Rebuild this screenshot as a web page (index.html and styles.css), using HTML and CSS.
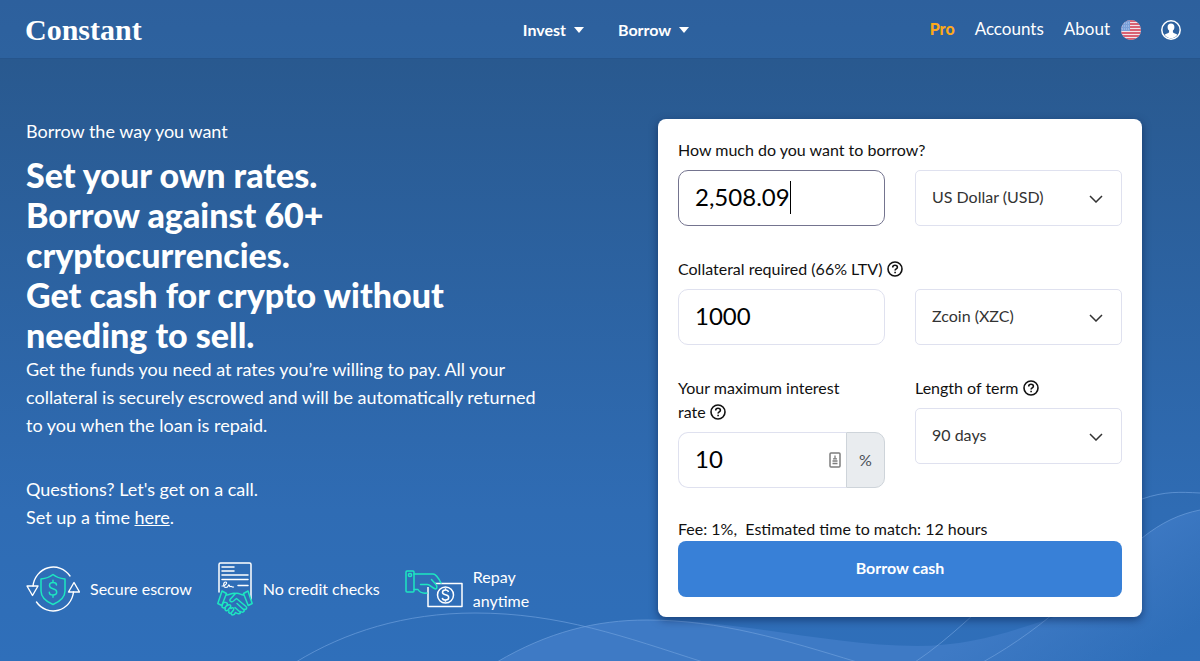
FILE: index.html
```
<!DOCTYPE html>
<html lang="en">
  <head>
    <meta charset="UTF-8" />
    <meta name="viewport" content="width=device-width, initial-scale=1.0" />
    <title>Constant</title>
    <link rel="stylesheet" href="styles.css" />
  </head>
  <body>
    <header class="navbar">
      <a href="#" class="logo">Constant</a>
      <nav class="menu">
        <button type="button" class="menu-item">Invest <span class="arrow"></span></button>
        <button type="button" class="menu-item">Borrow <span class="arrow"></span></button>
      </nav>
      <nav class="user-menu">
        <a href="#" class="pro">Pro</a>
        <a href="#">Accounts</a>
        <a href="#" class="about">About</a>
        <button type="button" class="icon-button flag" aria-label="Language">
          <svg width="20" height="20" viewBox="0 0 20 20">
            <defs>
              <clipPath id="round"><circle cx="10" cy="10" r="10" /></clipPath>
            </defs>
            <g clip-path="url(#round)">
              <rect width="20" height="20" fill="#f3e4ea" />
              <path d="M0 1h20M0 4h20M0 7h20M0 10h20M0 13h20M0 16h20M0 19h20" stroke="#d2364c" stroke-width="1.6" />
              <rect width="9" height="11" fill="#7a9fd8" />
              <path d="M1 3h8M1 6h8M1 9h8" stroke="#b4cbed" stroke-width="1" stroke-dasharray="1 1" />
            </g>
          </svg>
        </button>
        <button type="button" class="icon-button" aria-label="Profile">
          <svg width="20" height="20" viewBox="0 0 20 20">
            <circle cx="10" cy="10" r="9.2" fill="none" stroke="#fff" stroke-width="1.5" />
            <path d="M10 3.400c2.300 0 3.400 1.500 3.400 3.500 0 1.700-.6 2.800-1.500 3.700v1.700c.8 1 3.100 1.200 4.500 2.400A8.300 8.300 0 0 1 10 18.300a8.300 8.300 0 0 1-6.400-3.600c1.400-1.200 3.700-1.400 4.500-2.400v-1.700C7.200 9.700 6.600 8.600 6.600 6.900c0-2 1.100-3.500 3.400-3.500z" fill="#fff" />
          </svg>
        </button>
      </nav>
    </header>

    <main class="hero">
      <!-- background waves -->
      <svg class="waves" viewBox="0 0 1200 180" preserveAspectRatio="none" aria-hidden="true">
        <defs>
          <linearGradient id="fade" gradientUnits="userSpaceOnUse" x1="1060" y1="90" x2="1130" y2="190">
            <stop offset="0" stop-color="#3e7ac5" />
            <stop offset="1" stop-color="#3e7ac5" stop-opacity="0" />
          </linearGradient>
        </defs>
        <path d="M497 180C548 150 596 138 647 138C740 138 830 164 917 164C975 164 1020 146 1052 136C1090 104 1115 80 1142 56C1162 40 1180 32 1200 28V180z" />
        <path d="M296 180C345 150 405 131 475 131C560 131 625 155 703 180" />
        <path d="M497 180C548 150 596 138 647 138C720 138 785 158 857 180" />
        <path d="M915 180C985 134 1050 40 1142 17C1165 9 1180 10 1200 11" />
        <path d="M983 180C1048 144 1090 98 1142 56C1162 40 1180 32 1200 28" />
      </svg>

      <section class="intro">
        <p>Borrow the way you want</p>
        <h1>Set your own rates.<br />Borrow against 60+ cryptocurrencies.<br />Get cash for crypto without needing to sell.</h1>
        <p>Get the funds you need at rates you’re willing to pay. All your collateral is securely escrowed and will be automatically returned to you when the loan is repaid.</p>
        <p class="questions">Questions? Let's get on a call.<br />Set up a time <a href="#">here</a>.</p>

        <ul class="features">
          <li class="escrow">
            <svg width="54" height="46" viewBox="0 0 54 46">
              <g fill="none" stroke="#fff" stroke-width="1.4" stroke-linejoin="round" stroke-linecap="round">
                <path d="M7 20A20.500 21.500 0 0 1 44 10" />
                <path d="M1 20h11L6.500 29.500z" />
                <path d="M47.500 26A20.500 21.500 0 0 1 10.500 36" />
                <path d="M42.500 26h11L48 16.500z" />
              </g>
              <g fill="none" stroke="#1ee6c1" stroke-width="1.5" stroke-linejoin="round" stroke-linecap="round">
                <path d="M27 8.500C30 11 34 12.500 39 13v12c0 6-5 10.500-12 13.500C20 35.500 15 31 15 25V13c5-.5 9-2 12-4.500z" />
                <path d="M30.500 19c0-1.600-1.500-2.500-3.500-2.500s-3.500 1-3.500 3 1.500 2.700 3.500 3.200 3.700 1.300 3.700 3.300-1.600 3-3.700 3-3.700-1-3.700-2.800M27 14.200v2.300M27 29v2.300" />
              </g>
            </svg>
            <span>Secure escrow</span>
          </li>
          <li class="credit">
            <svg width="36" height="54" viewBox="0 0 36 54">
              <g fill="none" stroke="#fff" stroke-width="1.5" stroke-linejoin="round" stroke-linecap="round">
                <path d="M2 30V2.500Q2 1 3.500 1h29Q34 1 34 2.500V37" />
                <path d="M5 5h12M5 9h12M5 13h26M5 17.500h26M21 23.500h10" />
                <path d="M5 24c4 0 6-4 3.500-4S6 25.500 9 25.500s2-3 3-2.500 0 2 1.500 1.500 1.500 1 3 .5" stroke-width="1.2" />
              </g>
              <g fill="none" stroke="#1ee6c1" stroke-width="1.5" stroke-linejoin="round" stroke-linecap="round">
                <path d="M5 29l4.500 2.500L4.800 43.500.8 41.500z" />
                <path d="M31 29l-4.500 2.500L31.200 43.500l4-2z" />
                <path d="M9.500 33c4-.3 5.500-2.500 9.500-1.500M26.500 33c-3-.3-5-2.500-8-1.500l-5.500 6c-.8 2 1.500 3 3.500 1.500l3-2.500 9.500 8c1.700 1.600 0 3.600-2 2.800" />
                <path d="M27 47.500c1 2-1.500 3.500-3.500 2M23.500 49.500c.2 2.500-2.500 3-5 1M18.500 50.500c-1 3-4 3-4.500 1" />
                <path d="M6 41l-1 3c-.5 2 2 2.500 3.500 1l1.500-2c1.500-2-2-3.500-4-2zM8.500 46c-1.500 2 1 3.500 2.500 2l2.500-3c1-2-1.500-3-3-1.500M12 49c-1 2 1 3 2.500 1.500l2-2.500c1-2-1-3-2.500-1.500M20 41.500l6.500 6M18 45.500l5 4.500" />
              </g>
            </svg>
            <span>No credit checks</span>
          </li>
          <li class="repay">
            <svg width="58" height="38" viewBox="0 0 58 38">
              <g fill="none" stroke="#fff" stroke-width="1.5" stroke-linejoin="round">
                <path d="M23 17v19.500h34v-23H30" />
                <circle cx="40.500" cy="25" r="8" />
                <path d="M43.500 22c-.3-1.400-1.400-2-3-2s-3 .7-3 2.300 1.300 2.200 3 2.500 3.200 1 3.200 2.700-1.500 2.500-3.200 2.500-3-.8-3.200-2.200M40.500 18.200V20M40.500 30v1.800" />
              </g>
              <g fill="none" stroke="#1ee6c1" stroke-width="1.5" stroke-linejoin="round" stroke-linecap="round">
                <rect x="1" y="1" width="8" height="21" rx="1" />
                <circle cx="5" cy="5" r="1.6" />
                <path d="M9 4h19c3 0 5 3 8 9M9 19.500h4c2 3.500 5 4 9 3.500M15.500 14.500h7c2.500 0 4 3 8 4.500 2-.5 1.500-3 .5-4.500l-4.500-5" />
              </g>
            </svg>
            <span>Repay anytime</span>
          </li>
        </ul>
      </section>

      <form class="card">
        <div class="row">
          <div class="field">
            <label for="amount">How much do you want to borrow?</label>
            <div class="control">
              <input type="text" id="amount" class="active" value="2,508.09" />
              <span class="caret"></span>
            </div>
          </div>
          <div class="field">
            <div class="control">
              <select id="currency" aria-label="Currency">
                <option>US Dollar (USD)</option>
              </select>
              <svg class="chevron" width="14" height="8" viewBox="0 0 14 8"><path d="M1 1l6 6 6-6" /></svg>
            </div>
          </div>
        </div>

        <div class="row">
          <div class="field">
            <label for="collateral">Collateral required (66% LTV)
              <svg class="help" width="16" height="16" viewBox="0 0 16 16"><circle cx="8" cy="8" r="7" /><path d="M5.700 6.400c0-1.400 1-2.200 2.300-2.200s2.400.8 2.400 2c0 1.600-2.300 1.600-2.300 3.200M8.100 10.800v1.500" /></svg>
            </label>
            <input type="text" id="collateral" value="1000" />
          </div>
          <div class="field">
            <div class="control">
              <select id="coin" aria-label="Collateral coin">
                <option>Zcoin (XZC)</option>
              </select>
              <svg class="chevron" width="14" height="8" viewBox="0 0 14 8"><path d="M1 1l6 6 6-6" /></svg>
            </div>
          </div>
        </div>

        <div class="row last">
          <div class="field">
            <label for="rate">Your maximum interest
              <span class="nowrap">rate
                <svg class="help" width="16" height="16" viewBox="0 0 16 16"><circle cx="8" cy="8" r="7" /><path d="M5.700 6.400c0-1.400 1-2.200 2.300-2.200s2.400.8 2.400 2c0 1.600-2.300 1.600-2.300 3.200M8.100 10.800v1.500" /></svg>
              </span>
            </label>
            <div class="control group">
              <input type="text" id="rate" value="10" />
              <svg class="autofill" width="12" height="16" viewBox="0 0 12 16">
                <rect x="1" y="1" width="10" height="14" rx="1" fill="#fff" stroke="#7d7d7d" stroke-width="1.5" />
                <path d="M6 3.500v4M4 6.800h4M3.500 9h5M3.500 11.500h5" stroke="#7d7d7d" stroke-width="1.3" />
              </svg>
              <span class="percent">%</span>
            </div>
          </div>
          <div class="field top">
            <label for="term">Length of term
              <svg class="help" width="16" height="16" viewBox="0 0 16 16"><circle cx="8" cy="8" r="7" /><path d="M5.700 6.400c0-1.400 1-2.200 2.300-2.200s2.400.8 2.400 2c0 1.600-2.300 1.600-2.300 3.200M8.100 10.800v1.500" /></svg>
            </label>
            <div class="control">
              <select id="term">
                <option>90 days</option>
              </select>
              <svg class="chevron" width="14" height="8" viewBox="0 0 14 8"><path d="M1 1l6 6 6-6" /></svg>
            </div>
          </div>
        </div>

        <p class="fee">Fee: 1%,&nbsp; Estimated time to match: 12 hours</p>
        <button type="submit" class="submit">Borrow cash</button>
      </form>
    </main>
  </body>
</html>
```

FILE: styles.css
```
* {
  box-sizing: border-box;
}
body {
  margin: 0;
  min-height: 100vh;
  display: flex;
  flex-direction: column;
  font: 16px/24px Lato, "Open Sans", sans-serif;
  color: #111;
  background: #2c609d;
}
p,
h1,
ul {
  margin: 0;
  padding: 0;
}
button {
  font-family: inherit;
  border: none;
  cursor: pointer;
}

/* navbar */
.navbar {
  display: grid;
  grid-template-columns: 1fr auto 1fr;
  align-items: center;
  height: 58px;
  padding: 2px 19px 0 25px;
  background: linear-gradient(#2d609d, #2d629f);
}
.logo {
  font: bold 30px "Liberation Serif", serif;
  color: #fff;
  text-decoration: none;
}
.menu {
  display: flex;
  gap: 34px;
  margin-left: 6px;
}
.menu-item {
  display: flex;
  align-items: center;
  gap: 8px;
  padding: 0;
  background: none;
  color: #fff;
  font-size: 16px;
  line-height: 20px;
  font-weight: 700;
}
.arrow {
  border: 5px solid transparent;
  border-top: 6px solid #fff;
  border-bottom: none;
}
.user-menu {
  display: flex;
  align-items: center;
  justify-content: flex-end;
  gap: 20px;
}
.user-menu a {
  padding-bottom: 2px;
  color: #fff;
  font-size: 17px;
  text-decoration: none;
}
.user-menu .pro {
  color: #fda91a;
  font-size: 16px;
  font-weight: 900;
}
.user-menu .about {
  margin-right: -9px;
}
.icon-button {
  padding: 0;
  background: none;
}
.icon-button svg {
  display: block;
}

/* hero */
.hero {
  position: relative;
  flex: 1;
  display: grid;
  grid-template-columns: 530px minmax(0, 484px);
  justify-content: space-between;
  align-items: start;
  padding: 58px 58px 45px 26px;
  border-top: 1px solid #26558c;
  background: linear-gradient(#29598f, #2f6cb4 75%, #2f6fba);
}
.waves {
  position: absolute;
  left: 0;
  bottom: 0;
  width: 100%;
  height: 180px;
}
.waves path {
  fill: none;
  stroke: #6c9edb;
  stroke-opacity: 0.7;
}
.waves path:first-of-type {
  fill: url(#fade);
  stroke: none;
}

/* left side */
.intro {
  position: relative;
  color: #fff;
  font-size: 18px;
  line-height: 28px;
}
.intro h1 {
  margin-top: 10px;
  font-size: 34px;
  line-height: 40px;
  font-weight: 900;
}
.intro a {
  color: #fff;
}
.questions {
  margin-top: 36px;
}
.features {
  display: flex;
  align-items: center;
  gap: 25px;
  margin-top: 31px;
  list-style: none;
  font-size: 16px;
  line-height: 24px;
}
.features li {
  display: flex;
  align-items: center;
  gap: 10px;
}
.features svg {
  flex: none;
}
.features .repay {
  width: 128px;
}

/* borrow form */
.card {
  position: relative;
  margin-top: 2px;
  padding: 19px 20px 20px;
  background: #fff;
  border-radius: 8px;
  box-shadow: 0 3px 8px rgba(0, 20, 60, 0.5);
}
.row {
  display: grid;
  grid-template-columns: repeat(2, minmax(0, 1fr));
  gap: 30px;
  align-items: end;
  margin-bottom: 31px;
}
.row.last {
  margin-bottom: 29px;
}
.field.top {
  align-self: start;
}
.field label {
  display: block;
  margin-bottom: 8px;
}
.row:not(.last) label,
.nowrap {
  white-space: nowrap;
}
.help {
  vertical-align: -2px;
  fill: none;
  stroke: #111;
  stroke-width: 1.6;
}
.control {
  position: relative;
}
.card input,
.card select {
  display: block;
  width: 100%;
  height: 56px;
  padding: 0 16px 3px;
  border: 1px solid #dfe1ef;
  background: #fff;
  outline: none;
}
.card input {
  border-radius: 10px;
  font: 24px Lato, sans-serif;
  color: #000;
}
.card input.active {
  border-color: #74748f;
}
.card select {
  appearance: none;
  border-radius: 5px;
  font: 16px Lato, sans-serif;
  color: #333;
}
.caret {
  position: absolute;
  left: 112px;
  top: 11px;
  width: 1px;
  height: 33px;
  background: #000;
}
.chevron {
  position: absolute;
  right: 19px;
  top: 25px;
  fill: none;
  stroke: #333;
  stroke-width: 1.5;
  pointer-events: none;
}
.group {
  display: flex;
}
.card .group input {
  flex: 1;
  min-width: 0;
  border-right: none;
  border-radius: 10px 0 0 10px;
}
.percent {
  width: 39px;
  display: flex;
  align-items: center;
  justify-content: center;
  background: #e9ecef;
  border: 1px solid #ced4da;
  border-radius: 0 10px 10px 0;
  color: #495057;
}
.autofill {
  position: absolute;
  right: 44px;
  top: 20px;
}
.submit {
  display: block;
  width: 100%;
  height: 56px;
  padding-bottom: 4px;
  background: #3880d7;
  color: #fff;
  border-radius: 8px;
  font-size: 16px;
  font-weight: 700;
}
```
